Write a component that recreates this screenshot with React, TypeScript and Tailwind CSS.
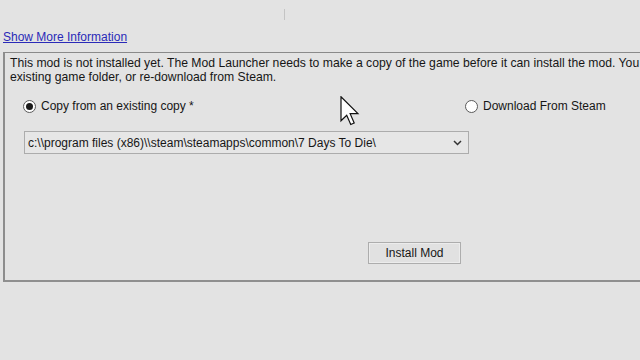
import React from "react";

function Radio({ checked }: { checked: boolean }) {
  return (
    <span className="relative inline-flex h-[13px] w-[13px] shrink-0 items-center justify-center rounded-full border border-[#5a5a5a] bg-white">
      {checked && <span className="h-[7px] w-[7px] rounded-full bg-[#1a1a1a]" />}
    </span>
  );
}

export default function App() {
  return (
    <div
      className="relative h-[360px] w-[640px] overflow-hidden bg-[#e3e3e3] text-[12px] leading-[14px] text-[#161616]"
      style={{ fontFamily: '"Liberation Sans", Arial, sans-serif' }}
    >
      <div className="h-[30px] pl-[284px] pt-[9px]">
        <div className="h-[11px] w-px bg-[#c4c4c4]" />
      </div>
      <div className="pl-[3px]">
        <span className="text-[#2a2ab8] underline decoration-[#2a2ab8]">Show More Information</span>
      </div>
      <div className="ml-[3px] mt-[8px] h-[230px] w-[700px] border border-[#8a8a8a] border-b-2 border-b-[#8f8f8f] border-l-2 border-l-[#8d8d8d] pl-[5px] pt-[3px]">
        <div className="whitespace-nowrap text-[12.2px]">
          This mod is not installed yet. The Mod Launcher needs to make a copy of the game before it can install the mod. You
          <br />
          existing game folder, or re-download from Steam.
        </div>
        <div className="mt-[15px] flex items-center">
          <div className="flex w-[455px] items-center gap-[5px] pl-[13px]">
            <Radio checked />
            <span>Copy from an existing copy *</span>
          </div>
          <div className="flex items-center gap-[5px]">
            <Radio checked={false} />
            <span>Download From Steam</span>
          </div>
        </div>
        <div className="ml-[14px] mt-[18px] flex h-[23px] w-[445px] items-center justify-between border border-[#acacac] bg-[#e6e6e6] pl-[3px] pr-[6px]">
          <span>c:\\program files (x86)\\steam\steamapps\common\7 Days To Die\</span>
          <svg width="9" height="6" viewBox="0 0 9 6">
            <path d="M1 1 L4.5 4.5 L8 1" fill="none" stroke="#333" strokeWidth="1.5" />
          </svg>
        </div>
        <div className="ml-[358px] mt-[88px] flex h-[22px] w-[93px] items-center justify-center border border-[#adadad] bg-[#e1e1e1] shadow-[inset_0_0_0_1px_#ececec]">
          Install Mod
        </div>
      </div>
      <svg
        className="absolute left-[340px] top-[96px]"
        width="20"
        height="30"
        viewBox="0 0 13 20"
      >
        <path
          d="M0.5 0.5 L0.5 16.5 L4.3 12.8 L7 19 L9.3 18 L6.6 11.8 L11.8 11.8 Z"
          fill="#ffffff"
          stroke="#111"
          strokeWidth="0.8"
          strokeLinejoin="miter"
        />
      </svg>
    </div>
  );
}
